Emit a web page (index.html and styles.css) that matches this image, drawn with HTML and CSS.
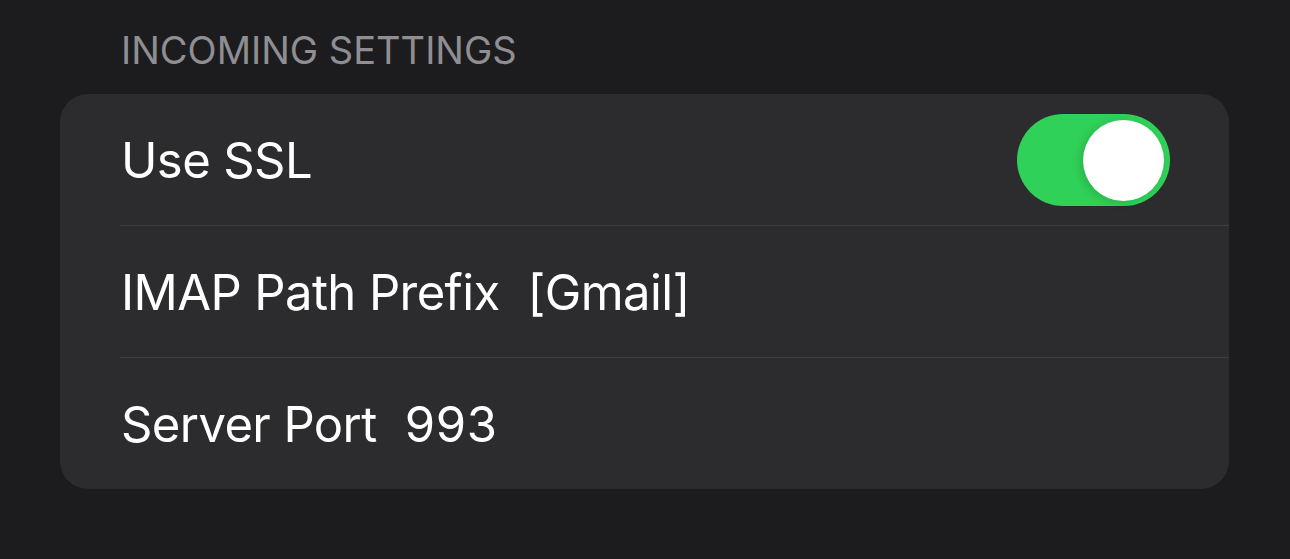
FILE: index.html
```html
<!DOCTYPE html>
<html>
<head>
<meta charset="utf-8">
<link rel="stylesheet" href="styles.css">
</head>
<body>
<div class="page">
  <div class="section-header">INCOMING SETTINGS</div>
  <div class="card">
    <div class="row">
      <div class="row-inner">
        <span class="label">Use SSL</span>
        <span class="spacer"></span>
        <span class="toggle"><span class="knob"></span></span>
      </div>
    </div>
    <div class="row">
      <div class="row-inner">
        <span class="label">IMAP Path Prefix</span>
        <span class="value">[Gmail]</span>
      </div>
    </div>
    <div class="row">
      <div class="row-inner">
        <span class="label">Server Port</span>
        <span class="value digits">993</span>
      </div>
    </div>
  </div>
</div>
</body>
</html>
```

FILE: styles.css
```css
html, body {
  margin: 0;
  padding: 0;
  background: #1c1c1e;
  height: 100%;
}
body {
  font-family: Inter, "Liberation Sans", sans-serif;
  color: #ffffff;
}
.page {
  padding: 26px 61px 0 60px;
}
.section-header {
  color: #8e8e93;
  font-size: 38px;
  line-height: 48px;
  padding-left: 61px;
  height: 68px;
  letter-spacing: 0;
}
.card {
  background: #2c2c2e;
  border-radius: 28px;
  overflow: hidden;
}
.row {
  padding-left: 60px;
}
.row-inner {
  display: flex;
  align-items: center;
  height: 132px;
  border-bottom: 1px solid #3d3d41;
  padding-right: 59px;
  font-size: 49px;
  letter-spacing: -0.6px;
  padding-top: 2px;
  box-sizing: border-box;
}
.row:last-child .row-inner {
  border-bottom: none;
  height: 131px;
}
.label {
  padding-left: 1px;
}
.value {
  margin-left: 28px;
}
.digits {
  letter-spacing: 0.6px;
}
.spacer {
  flex: 1;
}
.toggle {
  width: 153px;
  height: 92px;
  border-radius: 46px;
  background: #30d158;
  display: flex;
  align-items: center;
  justify-content: flex-end;
  padding-right: 6px;
  box-sizing: border-box;
  margin-top: -1px;
}
.knob {
  width: 81px;
  height: 81px;
  border-radius: 50%;
  background: #ffffff;
  box-shadow: -3px 2px 8px rgba(0,0,0,0.15);
}
```
